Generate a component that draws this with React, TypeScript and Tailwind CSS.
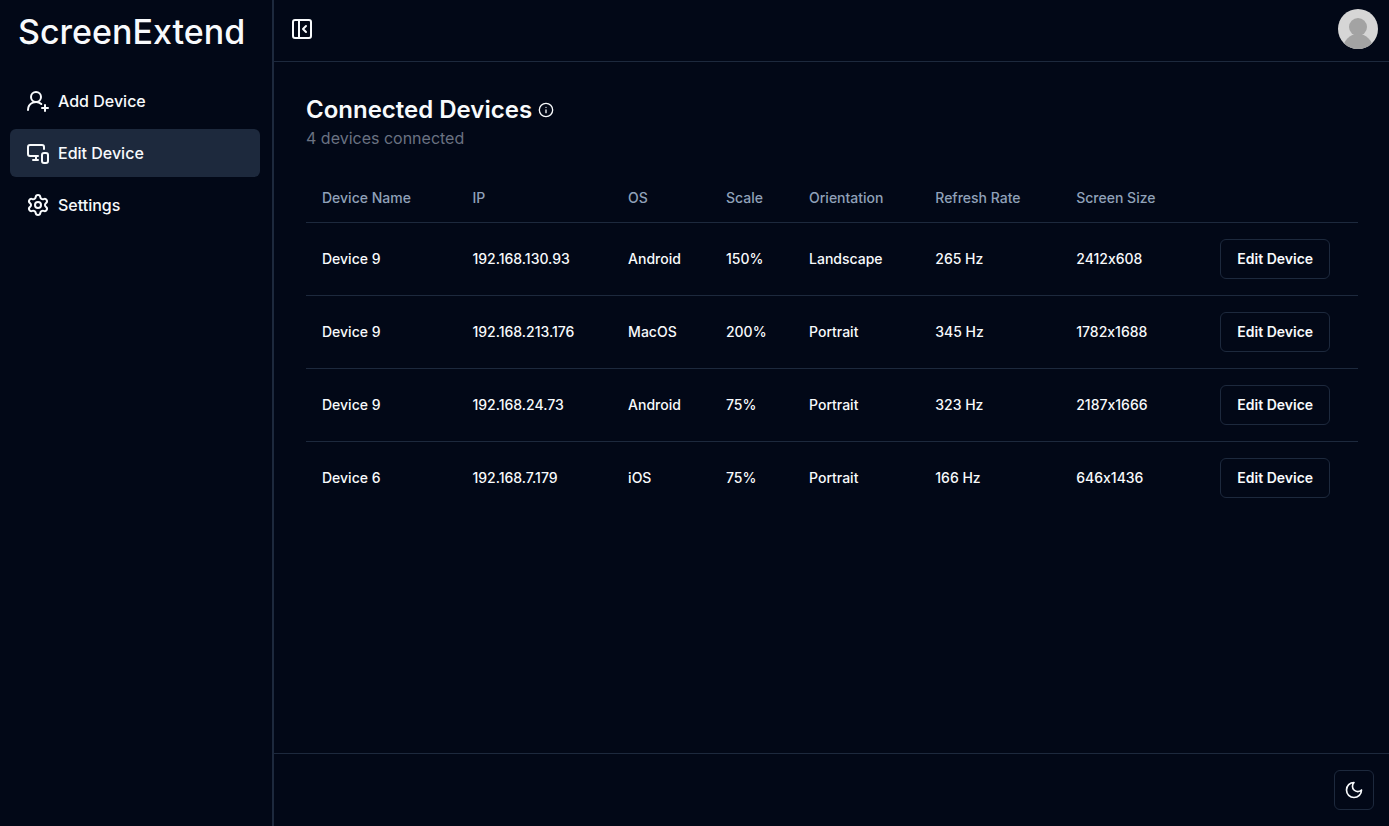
import { Info, MonitorSmartphone, PanelLeftClose, Settings, UserRoundPlus } from 'lucide-react';

interface Device {
  name: string;
  ip: string;
  os: string;
  scale: string;
  orientation: string;
  refreshRate: string;
  screenSize: string;
}

const devices: Device[] = [
  { name: 'Device 9', ip: '192.168.130.93', os: 'Android', scale: '150%', orientation: 'Landscape', refreshRate: '265 Hz', screenSize: '2412x608' },
  { name: 'Device 9', ip: '192.168.213.176', os: 'MacOS', scale: '200%', orientation: 'Portrait', refreshRate: '345 Hz', screenSize: '1782x1688' },
  { name: 'Device 9', ip: '192.168.24.73', os: 'Android', scale: '75%', orientation: 'Portrait', refreshRate: '323 Hz', screenSize: '2187x1666' },
  { name: 'Device 6', ip: '192.168.7.179', os: 'iOS', scale: '75%', orientation: 'Portrait', refreshRate: '166 Hz', screenSize: '646x1436' },
];

const columns = [
  { label: 'Device Name', width: 'w-[14.3%]' },
  { label: 'IP', width: 'w-[14.8%]' },
  { label: 'OS', width: 'w-[9.3%]' },
  { label: 'Scale', width: 'w-[7.9%]' },
  { label: 'Orientation', width: 'w-[12%]' },
  { label: 'Refresh Rate', width: 'w-[13.4%]' },
  { label: 'Screen Size', width: 'w-[13.7%]' },
];

const navItems = [
  { label: 'Add Device', icon: UserRoundPlus, active: false },
  { label: 'Edit Device', icon: MonitorSmartphone, active: true },
  { label: 'Settings', icon: Settings, active: false },
];

function Sidebar() {
  return (
    <aside className="flex w-[274px] shrink-0 flex-col border-r-2 border-slate-800">
      <h1 className="px-[18px] pt-3 text-[34px] leading-10 font-medium">ScreenExtend</h1>
      <nav className="mt-[25px] flex flex-col gap-1 pr-3 pl-[10px]">
        {navItems.map(({ label, icon: Icon, active }) => (
          <a
            key={label}
            href="#"
            className={`flex h-12 items-center gap-2 rounded-md px-4 font-medium ${
              active ? 'bg-slate-800' : 'hover:bg-slate-800'
            }`}
          >
            <Icon className="size-6" />
            {label}
          </a>
        ))}
      </nav>
    </aside>
  );
}

function Avatar() {
  return (
    <button aria-label="Account" className="size-10 overflow-hidden rounded-full bg-[#d6d6d6]">
      <svg viewBox="0 0 40 40" className="size-10" fill="#a3a3a3">
        <circle cx="20" cy="18" r="9" />
        <circle cx="20" cy="40" r="15" />
      </svg>
    </button>
  );
}

function DeviceTable() {
  return (
    <table className="w-full table-fixed text-left text-sm">
      <thead>
        <tr className="h-12 border-b border-slate-800 text-slate-400">
          {columns.map((column) => (
            <th key={column.label} scope="col" className={`px-4 font-medium ${column.width}`}>
              {column.label}
            </th>
          ))}
          <td />
        </tr>
      </thead>
      <tbody>
        {devices.map((device) => (
          <tr key={device.ip} className="border-b border-slate-800 last:border-b-0">
            <td className="p-4 font-medium">{device.name}</td>
            <td className="p-4 font-medium">{device.ip}</td>
            <td className="p-4 font-medium">{device.os}</td>
            <td className="p-4 font-medium">{device.scale}</td>
            <td className="p-4 font-medium">{device.orientation}</td>
            <td className="p-4 font-medium">{device.refreshRate}</td>
            <td className="p-4 font-medium">{device.screenSize}</td>
            <td className="p-4">
              <button className="h-10 rounded-md border border-slate-800 px-4 font-semibold whitespace-nowrap hover:bg-slate-800">
                Edit Device
              </button>
            </td>
          </tr>
        ))}
      </tbody>
    </table>
  );
}

export default function App() {
  return (
    <div className="flex min-h-screen bg-[#020817] font-['Inter',sans-serif] text-slate-50 [font-feature-settings:'calt'_0]">
      <Sidebar />
      <div className="flex min-w-0 flex-1 flex-col">
        <header className="flex h-[62px] items-center justify-between border-b border-slate-800 pr-[11px] pb-1 pl-4">
          <button aria-label="Collapse sidebar">
            <PanelLeftClose className="size-6" />
          </button>
          <Avatar />
        </header>
        <main className="flex-1 py-8 pr-[31px] pl-8">
          <div className="flex items-center gap-1.5">
            <h2 className="text-2xl font-semibold">Connected Devices</h2>
            <button aria-label="About connected devices">
              <Info className="size-4" />
            </button>
          </div>
          <p className="text-gray-500">4 devices connected</p>
          <div className="mt-6">
            <DeviceTable />
          </div>
        </main>
        <footer className="flex justify-end border-t border-slate-800 py-4 pr-[15px]">
          <button
            aria-label="Toggle theme"
            className="flex size-10 items-center justify-center rounded-md border border-slate-800 hover:bg-slate-800"
          >
            <svg
              viewBox="0 0 24 24"
              className="size-5"
              fill="none"
              stroke="currentColor"
              strokeWidth="2"
              strokeLinecap="round"
              strokeLinejoin="round"
            >
              <path d="M12 3a6 6 0 0 0 9 9 9 9 0 1 1-9-9Z" />
            </svg>
          </button>
        </footer>
      </div>
    </div>
  );
}
